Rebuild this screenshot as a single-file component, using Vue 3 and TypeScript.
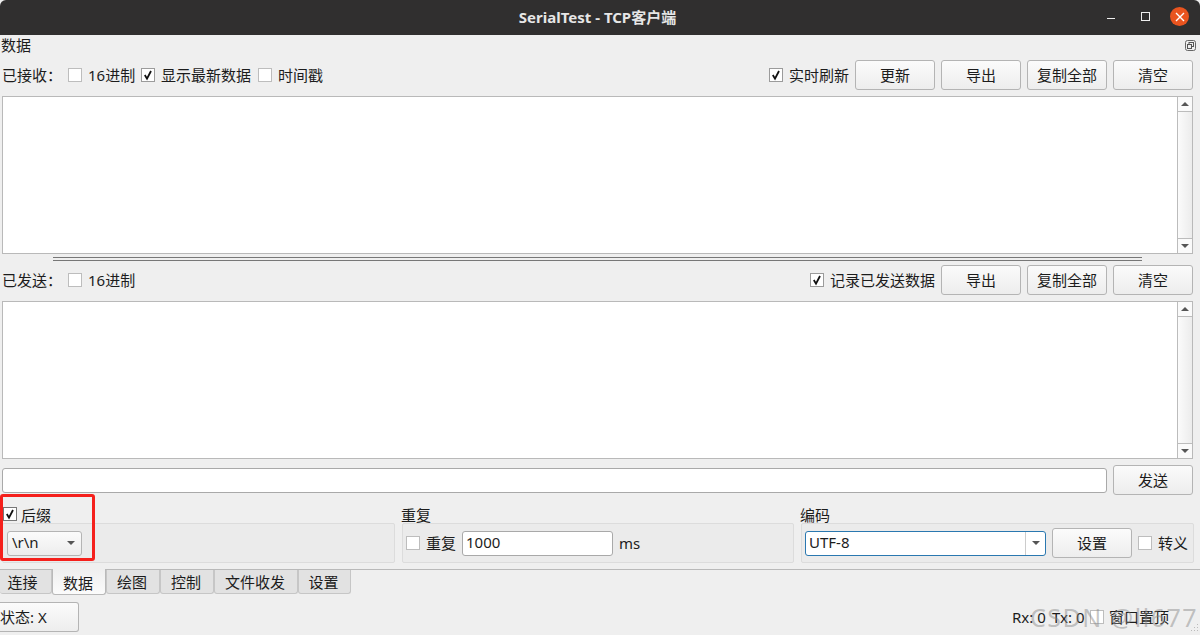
<script setup lang="ts">
interface Tab {
  label: string
  width: number
  active?: boolean
}

const tabs: Tab[] = [
  { label: '连接', width: 52 },
  { label: '数据', width: 54, active: true },
  { label: '绘图', width: 54 },
  { label: '控制', width: 54 },
  { label: '文件收发', width: 84 },
  { label: '设置', width: 53 }
]
const recvButtons = ['更新', '导出', '复制全部', '清空']
const sentButtons = ['导出', '复制全部', '清空']
</script>

<template>
  <div class="window">
    <header class="titlebar">
      <span class="title">SerialTest - TCP客户端</span>
      <div class="win-controls">
        <span class="win-min"></span>
        <span class="win-max"></span>
        <span class="win-close">
          <svg width="10" height="10" viewBox="0 0 10 10">
            <path d="M1 1L9 9M9 1L1 9" stroke="#fff" stroke-width="1.4" fill="none" />
          </svg>
        </span>
      </div>
    </header>

    <section class="dock">
      <div class="dock-title">
        <span>数据</span>
        <svg class="float-icon" width="11" height="11" viewBox="0 0 11 11">
          <rect x="0.5" y="0.5" width="10" height="10" rx="2" fill="none" stroke="#666" />
          <rect x="4" y="2.5" width="4.5" height="4" fill="none" stroke="#555" />
          <rect x="2.5" y="4.5" width="4" height="4" fill="#eee" stroke="#555" />
        </svg>
      </div>

      <div class="toolbar">
        <span class="lbl recv-lbl">已接收：</span>
        <span class="check"></span><span class="lbl c1">16进制</span>
        <span class="check on"><svg width="12" height="12" viewBox="0 0 12 12"><path d="M2.8 6L5 9.6L9 2" /></svg></span><span class="lbl c2">显示最新数据</span>
        <span class="check"></span><span class="lbl">时间戳</span>
        <span class="spacer"></span>
        <span class="check on"><svg width="12" height="12" viewBox="0 0 12 12"><path d="M2.8 6L5 9.6L9 2" /></svg></span><span class="lbl c3">实时刷新</span>
        <button v-for="b in recvButtons" :key="b" class="btn">{{ b }}</button>
      </div>

      <div class="textbox">
        <div class="scrollbar">
          <span class="sb-btn"><i class="arrow up"></i></span>
          <span class="sb-track"></span>
          <span class="sb-btn"><i class="arrow down"></i></span>
        </div>
      </div>

      <div class="splitter"></div>

      <div class="toolbar second">
        <span class="lbl recv-lbl">已发送：</span>
        <span class="check"></span><span class="lbl">16进制</span>
        <span class="spacer"></span>
        <span class="check on"><svg width="12" height="12" viewBox="0 0 12 12"><path d="M2.8 6L5 9.6L9 2" /></svg></span><span class="lbl c3">记录已发送数据</span>
        <button v-for="b in sentButtons" :key="b" class="btn">{{ b }}</button>
      </div>

      <div class="textbox">
        <div class="scrollbar">
          <span class="sb-btn"><i class="arrow up"></i></span>
          <span class="sb-track"></span>
          <span class="sb-btn"><i class="arrow down"></i></span>
        </div>
      </div>

      <div class="send-row">
        <div class="send-input"></div>
        <button class="btn">发送</button>
      </div>

      <div class="groups">
        <div class="group">
          <div class="group-title">
            <span class="check on dark"><svg width="12" height="12" viewBox="0 0 12 12"><path d="M2.8 6L5 9.6L9 2" /></svg></span>后缀
          </div>
          <div class="group-box">
            <div class="combo suffix">
              <span class="val">\r\n</span>
              <i class="arrow down"></i>
            </div>
          </div>
        </div>
        <div class="group">
          <div class="group-title">重复</div>
          <div class="group-box repeat">
            <span class="check"></span><span class="lbl c4">重复</span>
            <div class="field">1000</div>
            <span class="lbl">ms</span>
          </div>
        </div>
        <div class="group">
          <div class="group-title">编码</div>
          <div class="group-box encode">
            <div class="combo utf">
              <span class="val">UTF-8</span>
              <span class="combo-drop"><i class="arrow down"></i></span>
            </div>
            <button class="btn">设置</button>
            <span class="check"></span><span class="lbl">转义</span>
          </div>
        </div>
      </div>
    </section>

    <div class="tabbar">
      <div v-for="t in tabs" :key="t.label" class="tab" :class="{ active: t.active }" :style="{ width: t.width + 'px' }">{{ t.label }}</div>
    </div>

    <footer class="statusbar">
      <button class="btn status-btn">状态: X</button>
      <span class="spacer"></span>
      <span class="lbl rx">Rx: 0</span>
      <span class="lbl tx">Tx: 0</span>
      <span class="check top-check"></span><span class="lbl">窗口置顶</span>
      <svg class="grip" width="11" height="11" viewBox="0 0 11 11">
        <g fill="#bbb">
          <rect x="8" y="0" width="1" height="1" />
          <rect x="5" y="3" width="1" height="1" /><rect x="8" y="3" width="1" height="1" />
          <rect x="2" y="6" width="1" height="1" /><rect x="5" y="6" width="1" height="1" /><rect x="8" y="6" width="1" height="1" />
        </g>
      </svg>
    </footer>

    <div class="watermark">CSDN @ll677</div>
    <div class="highlight"></div>
  </div>
</template>

<style>
html, body {
  margin: 0;
  background: #efefef;
}
</style>

<style scoped>
.window {
  position: relative;
  width: 1200px;
  height: 635px;
  overflow: hidden;
  display: flex;
  flex-direction: column;
  background: #efefef;
  color: #1c1c1c;
  font-family: "Noto Sans", "Noto Sans CJK SC", sans-serif;
  font-size: 15px;
}

.titlebar {
  height: 35px;
  flex: none;
  background: #302f2f;
  display: flex;
  align-items: center;
  justify-content: center;
  position: relative;
  border-radius: 6px 6px 0 0;
}

.title {
  color: #e6e6e6;
  font-size: 15px;
  font-weight: 700;
  margin: -2px 5px 0 0;
}

.win-controls {
  position: absolute;
  top: 7px;
  right: 11px;
  display: flex;
  align-items: flex-start;
}

.win-min {
  width: 8px;
  height: 1px;
  margin-top: 11px;
  margin-right: 26px;
  background: #eee;
}

.win-max {
  width: 7px;
  height: 7px;
  margin-top: 5px;
  border: 1px solid #eee;
  margin-right: 20px;
}

.win-close {
  width: 19px;
  height: 19px;
  border-radius: 50%;
  background: #e9541f;
  display: flex;
  align-items: center;
  justify-content: center;
}

.dock {
  flex: none;
  padding: 0 7px 0 2px;
}

.dock-title {
  height: 20px;
  line-height: 20px;
  display: flex;
  justify-content: space-between;
  align-items: center;
  margin-right: -3px;
  margin-left: -1px;
}

.toolbar {
  display: flex;
  align-items: center;
  height: 30px;
  margin: 5px 0 6px;
}

.toolbar.second {
  margin: 4px 0 6px;
}

.lbl {
  white-space: nowrap;
  line-height: 20px;
}

.recv-lbl {
  width: 66px;
  flex: none;
}

.spacer {
  flex: 1;
}

.check {
  width: 14px;
  height: 14px;
  flex: none;
  box-sizing: border-box;
  background: #fff;
  border: 1px solid #bdbdbd;
  margin-right: 6px;
  display: inline-flex;
  align-items: center;
  justify-content: center;
}

.check svg path {
  fill: none;
  stroke: #111;
  stroke-width: 1.8;
}

.check.on {
  border-color: #9b9b9b;
}

.check.dark {
  border-color: #777;
  margin-right: 4px;
  margin-top: -2px;
}

.c1 {
  width: 53px;
}

.c2 {
  width: 97px;
}

.c3 {
  margin-right: 6px;
}

.c4 {
  margin-right: 6px;
}

.btn {
  width: 80px;
  height: 30px;
  flex: none;
  box-sizing: border-box;
  padding: 0 0 2px;
  border: 1px solid #b4b4b4;
  border-radius: 3px;
  background: linear-gradient(#fbfbfb, #ededed);
  color: #1c1c1c;
  font: inherit;
}

.toolbar .btn + .btn {
  margin-left: 6px;
}

.textbox {
  height: 158px;
  box-sizing: border-box;
  background: #fff;
  border: 1px solid #b9b9b9;
  display: flex;
  justify-content: flex-end;
}

.scrollbar {
  width: 14px;
  display: flex;
  flex-direction: column;
  border-left: 1px solid #bcbcbc;
  background: linear-gradient(90deg, #fbfbfb, #ececec);
}

.sb-btn {
  height: 14px;
  flex: none;
  background: #fafafa;
  border-bottom: 1px solid #bcbcbc;
  display: flex;
  align-items: center;
  justify-content: center;
}

.sb-btn:last-child {
  border-bottom: 0;
  border-top: 1px solid #bcbcbc;
}

.sb-track {
  flex: 1;
}

.arrow {
  width: 0;
  height: 0;
  border-left: 4px solid transparent;
  border-right: 4px solid transparent;
}

.arrow.up {
  border-bottom: 4px solid #555;
}

.arrow.down {
  border-top: 4px solid #555;
}

.splitter {
  height: 2px;
  margin: 3px 51px 0 51px;
  border-top: 1px solid #777;
  border-bottom: 1px solid #777;
}

.send-row {
  display: flex;
  align-items: center;
  gap: 6px;
  height: 30px;
  margin-top: 6px;
}

.send-input {
  flex: 1;
  height: 25px;
  box-sizing: border-box;
  background: #fff;
  border: 1px solid #a9a9a9;
  border-radius: 3px;
}

.groups {
  display: grid;
  grid-template-columns: 393px 392px 393px;
  gap: 7px;
  margin-top: 10px;
}

.group-title {
  height: 18px;
  box-sizing: border-box;
  padding-top: 2px;
  line-height: 20px;
  display: flex;
  align-items: center;
  margin-left: -1px;
}

.group:first-child .group-title {
  margin-left: 0;
  padding-left: 1px;
}

.group-box {
  height: 40px;
  box-sizing: border-box;
  background: #ebebeb;
  border: 1px solid #dcdcdc;
  border-radius: 2px;
  display: flex;
  align-items: center;
  padding-left: 4px;
}

.combo {
  height: 25px;
  box-sizing: border-box;
  border: 1px solid #b4b4b4;
  border-radius: 3px;
  display: flex;
  align-items: center;
  justify-content: space-between;
  padding-left: 3px;
}

.val {
  padding-bottom: 2px;
}

.suffix {
  width: 75px;
  background: linear-gradient(#fbfbfb, #ededed);
  padding-left: 4px;
  padding-right: 5px;
}

.suffix .arrow {
  margin-right: 1px;
}

.repeat {
  padding-left: 3px;
}

.field {
  width: 151px;
  height: 25px;
  box-sizing: border-box;
  background: #fff;
  border: 1px solid #a9a9a9;
  border-radius: 3px;
  padding-left: 3px;
  line-height: 21px;
  margin-right: 6px;
}

.encode {
  padding-left: 3px;
}

.utf {
  width: 241px;
  background: #fff;
  border: 1px solid #2a78b0;
  margin-right: 6px;
}

.combo-drop {
  width: 19px;
  height: 100%;
  border-left: 1px solid #ccc;
  display: flex;
  align-items: center;
  justify-content: center;
}

.encode .btn {
  margin-right: 6px;
}

.tabbar {
  display: flex;
  height: 26px;
  margin-top: 6px;
  box-sizing: border-box;
  border-top: 1px solid #b9b9b9;
  flex: none;
}

.tab {
  height: 24px;
  box-sizing: border-box;
  background: #e2e2e2;
  border: 1px solid #c6c6c6;
  border-top: 0;
  border-radius: 0 0 3px 3px;
  text-align: center;
  line-height: 25px;
  padding-right: 2px;
}

.tab:first-child {
  border-left: 0;
  padding-right: 6px;
}

.tab.active {
  height: 26px;
  margin-top: -1px;
  background: linear-gradient(#efefef, #fbfbfb);
  border-color: #b9b9b9;
  border-top: 0;
  line-height: 28px;
}

.statusbar {
  display: flex;
  align-items: center;
  height: 30px;
  margin-top: 7px;
  position: relative;
  padding-right: 31px;
  flex: none;
}

.status-btn {
  width: 79px;
  text-align: left;
  padding-left: 0;
  border-left: 0;
  border-radius: 0 3px 3px 0;
}

.rx {
  width: 40px;
}

.tx {
  width: 38px;
}

.top-check {
  margin-right: 5px;
}

.grip {
  position: absolute;
  right: 0;
  bottom: -3px;
}

.watermark {
  position: absolute;
  left: 1030px;
  top: 600px;
  font-size: 25px;
  letter-spacing: 1.5px;
  color: rgba(130, 130, 130, 0.45);
  white-space: nowrap;
}

.highlight {
  position: absolute;
  left: 0;
  top: 494px;
  width: 95px;
  height: 67px;
  box-sizing: border-box;
  border: 3px solid #f5201c;
  border-radius: 3px;
}
</style>
